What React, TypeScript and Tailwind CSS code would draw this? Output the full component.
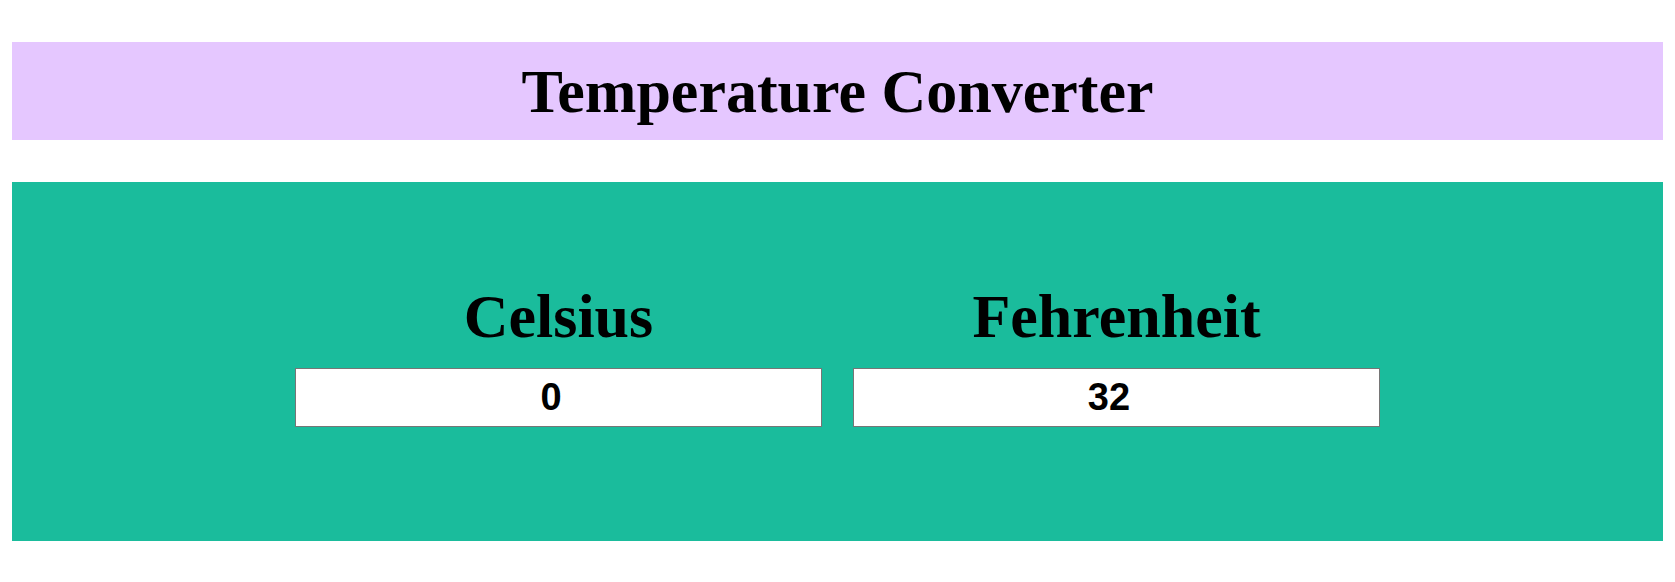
import { useState } from "react";

export default function App() {
  const [celsius, setCelsius] = useState("0");
  const [fahrenheit, setFahrenheit] = useState("32");

  function handleCelsius(e: React.ChangeEvent<HTMLInputElement>) {
    const v = e.target.value;
    setCelsius(v);
    const n = parseFloat(v);
    setFahrenheit(isNaN(n) ? "" : String(Math.round((n * 9) / 5 + 32)));
  }

  function handleFahrenheit(e: React.ChangeEvent<HTMLInputElement>) {
    const v = e.target.value;
    setFahrenheit(v);
    const n = parseFloat(v);
    setCelsius(isNaN(n) ? "" : String(Math.round(((n - 32) * 5) / 9)));
  }

  return (
    <div className="min-h-[582px] bg-white px-3 pt-[42px] font-['Liberation_Serif',serif]">
      <div className="flex h-[98px] items-center justify-center bg-[#e5c7ff]">
        <h1 className="text-[62px] font-bold leading-none text-black">
          Temperature Converter
        </h1>
      </div>

      <div className="mt-[42px] flex h-[359px] justify-center gap-[31px] bg-[#1abc9c] pt-[99px]">
        <div className="flex w-[527px] flex-col items-center">
          <label className="text-[62px] font-bold leading-[71px] text-black">
            Celsius
          </label>
          <input
            type="number"
            value={celsius}
            onChange={handleCelsius}
            className="mt-4 h-[59px] w-full border border-[#767676] bg-white text-center font-['Liberation_Sans',sans-serif] text-[38px] font-bold text-black outline-none"
          />
        </div>
        <div className="flex w-[527px] flex-col items-center">
          <label className="text-[62px] font-bold leading-[71px] text-black">
            Fehrenheit
          </label>
          <input
            type="number"
            value={fahrenheit}
            onChange={handleFahrenheit}
            className="mt-4 h-[59px] w-full border border-[#767676] bg-white text-center font-['Liberation_Sans',sans-serif] text-[38px] font-bold text-black outline-none"
          />
        </div>
      </div>
    </div>
  );
}
